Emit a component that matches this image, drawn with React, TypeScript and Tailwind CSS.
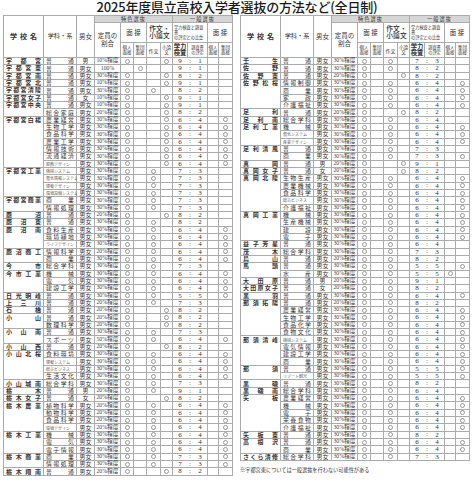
import React from 'react';

type School = { n: string; c: string[][] };

const s = (n: string, ...c: string[]): School => ({ n, c: c.map((x) => x.split('/')) });

const LEFT: School[] = [
  s('宇都宮', '普通/男/10%程度/1001/91/00'),
  s('宇都宮東', '普通/男女/100%/0100/91/00'),
  s('宇都宮南', '普通/男女/30%程度/1001/82/00'),
  s('宇都宮北', '普通/男女/10%程度/1001/91/00'),
  s('宇都宮清陵', '普通/男女/30%程度/1010/82/00'),
  s('宇都宮女子', '普通/女/10%程度/1001/91/00'),
  s('宇都宮中央', '普通/男女/10%程度/1001/91/00', '総合家庭/男女/20%程度/1001/82/00'),
  s(
    '宇都宮白楊',
    '農業経営/男女/30%程度/1001/64/01',
    '生物工学/男女/30%程度/1001/64/01',
    '食品科学/男女/30%程度/1001/64/01',
    '農業工学/男女/30%程度/1001/64/01',
    '情報技術/男女/30%程度/1001/64/01',
    '流通経済/男女/30%程度/1001/64/01',
    '服飾デザイン/男女/30%程度/1001/64/01'
  ),
  s(
    '宇都宮工業',
    '機械システム/男女/30%程度/1010/73/00',
    '電気情報システム/男女/30%程度/1010/73/00',
    '建築デザイン/男女/30%程度/1010/73/00',
    '環境設備システム/男女/30%程度/1010/73/00'
  ),
  s('宇都宮商業', '商業/男女/30%程度/1010/73/00', '情報処理/男女/30%程度/1010/73/00'),
  s('鹿沼', '普通/男女/20%程度/1001/82/00'),
  s('鹿沼東', '普通/男女/30%程度/1010/82/00'),
  s(
    '鹿沼南',
    '食料生産/男女/30%程度/1010/64/01',
    '環境緑地/男女/30%程度/1010/64/01',
    'ライフデザイン/男女/30%程度/1010/64/01'
  ),
  s('鹿沼商工', '情報科学/男女/20%程度/1010/64/01', '商業/男女/30%程度/1010/64/01'),
  s('今市', '総合学科/男女/30%程度/1010/73/00'),
  s(
    '今市工業',
    '機械/男女/30%程度/1010/64/01',
    '電気/男女/30%程度/1010/64/01',
    '建設工学/男女/30%程度/1010/64/01'
  ),
  s('日光明峰', '普通/男女/30%程度/1010/55/01'),
  s('上三川', '普通/男女/20%程度/1010/73/00'),
  s('石橋', '普通/男女/20%程度/1001/82/00'),
  s('小山', '普通/男女/20%程度/1001/82/00', '数理科学/男女/20%程度/1001/82/00'),
  s('小山南', '普通/男女/30%程度/1010/73/00', 'スポーツ/男女/50%程度/1010/64/01'),
  s('小山西', '普通/男女/20%程度/1001/82/00'),
  s(
    '小山北桜',
    '食料環境/男女/30%程度/1010/64/01',
    '建築システム/男女/30%程度/1010/64/01',
    '総合ビジネス/男女/30%程度/1010/64/01',
    '生活文化/男女/30%程度/1010/64/01'
  ),
  s('小山城南', '総合学科/男女/30%程度/1010/73/00'),
  s('栃木', '普通/男/20%程度/1010/91/00'),
  s('栃木女子', '普通/女/20%程度/1001/82/00'),
  s(
    '栃木農業',
    '植物科学/男女/20%程度/1010/64/01',
    '動物科学/男女/20%程度/1010/64/01',
    '食品科学/男女/20%程度/1010/64/01',
    '環境デザイン/男女/20%程度/1010/64/01'
  ),
  s(
    '栃木工業',
    '機械/男女/30%程度/1010/64/01',
    '電気/男女/30%程度/1010/64/01',
    '電子情報/男女/30%程度/1010/64/01'
  ),
  s('栃木商業', '商業/男女/30%程度/1010/73/01', '情報処理/男女/30%程度/1010/73/01'),
  s('栃木翔南', '普通/男女/20%程度/1001/82/00'),
];

const RIGHT: School[] = [
  s('壬生', '普通/男女/30%程度/1010/73/00'),
  s('佐野', '普通/男女/30%程度/1010/82/00'),
  s('佐野東', '普通/男女/20%程度/1001/82/00'),
  s(
    '佐野松桜',
    '情報制御/男女/30%程度/1010/64/01',
    '商業/男女/30%程度/1010/64/01',
    '家政/男女/30%程度/1010/64/01',
    '介護福祉/男女/30%程度/1010/64/01'
  ),
  s('足利', '普通/男女/20%程度/1001/82/00'),
  s('足利南', '総合学科/男女/30%程度/1010/64/00'),
  s(
    '足利工業',
    '機械/男女/30%程度/1010/64/01',
    '電気システム/男女/30%程度/1010/64/01',
    '産業デザイン/男女/30%程度/1010/64/01'
  ),
  s('足利清風', '普通/男女/30%程度/1010/73/00', '商業/男女/30%程度/1010/73/01'),
  s('真岡', '普通/男/20%程度/1001/91/00'),
  s('真岡女子', '普通/女/20%程度/1001/82/00'),
  s(
    '真岡北陵',
    '生物生産/男女/30%程度/1010/64/01',
    '農業機械/男女/30%程度/1010/64/01',
    '食品科学/男女/30%程度/1010/64/01',
    '総合ビジネス/男女/30%程度/1010/64/01',
    '介護福祉/男女/30%程度/1010/64/01'
  ),
  s(
    '真岡工業',
    '機械/男女/30%程度/1010/64/01',
    '生産機械/男女/30%程度/1010/64/01',
    '建設/男女/30%程度/1010/64/01',
    '電子/男女/30%程度/1010/64/01'
  ),
  s('益子芳星', '普通/男女/30%程度/1010/64/00'),
  s('茂木', '総合学科/男女/30%程度/1010/73/00'),
  s('烏山', '普通/男女/20%程度/1010/82/00'),
  s('馬頭', '普通/男女/30%程度/1010/55/01', '水産/男女/30%程度/1010/55/10'),
  s('大田原', '普通/男/20%程度/1010/91/00'),
  s('大田原女子', '普通/女/20%程度/1010/82/00'),
  s('黒羽', '普通/男女/30%程度/1010/64/01'),
  s(
    '那須拓陽',
    '普通/男女/20%程度/1010/82/00',
    '農業経営/男女/30%程度/1010/64/01',
    '生物工学/男女/30%程度/1010/64/01',
    '食品化学/男女/30%程度/1010/64/01',
    '食物文化/男女/30%程度/1010/64/01'
  ),
  s(
    '那須清峰',
    '機械システム/男女/30%程度/1010/64/01',
    '電気情報/男女/30%程度/1010/64/01',
    '建設工学/男女/30%程度/1010/64/01',
    '商業/男女/30%程度/1010/64/01'
  ),
  s('那須', '普通/男女/30%程度/1010/55/01', 'リゾート観光/男女/30%程度/1010/55/01'),
  s('黒磯', '普通/男女/30%程度/1010/82/00'),
  s('黒磯南', '総合学科/男女/30%程度/1010/64/00'),
  s(
    '矢板',
    '農業経営/男女/30%程度/1010/64/01',
    '機械/男女/30%程度/1010/64/01',
    '電子/男女/30%程度/1010/64/01',
    '栄養食物/男女/30%程度/1010/64/01',
    '介護福祉/男女/30%程度/1010/64/01'
  ),
  s('矢板東', '普通/男女/30%程度/1010/82/00'),
  s('高根沢', '普通/男女/30%程度/1010/64/01', '商業/男女/30%程度/1010/64/01'),
  s('さくら清修', '総合学科/男女/30%程度/1010/73/00'),
];

const SPAN: Record<number, string> = {
  1: 'row-span-1',
  2: 'row-span-2',
  3: 'row-span-3',
  4: 'row-span-4',
  5: 'row-span-5',
  6: 'row-span-6',
  7: 'row-span-7',
};

const C = 'bg-white flex items-center justify-center min-w-0 min-h-0';

function Dot() {
  return <span className="block w-[5px] h-[5px] rounded-full border border-[#999]" />;
}

function DotCell({ on }: { on: boolean }) {
  return <div className={C}>{on ? <Dot /> : null}</div>;
}

function Header() {
  const h = `${C} text-center text-[#333]`;
  return (
    <>
      <div className={`${h} row-span-3 text-[7px] leading-none font-semibold tracking-[3px] pl-[3px]`}>学校名</div>
      <div className={`${h} row-span-3 text-[6.2px] leading-none`}>学科・系</div>
      <div className={`${h} row-span-3 text-[6.5px] leading-none`}>男女</div>
      <div className={`${C} col-span-5 !bg-[#d6d6d6] text-[5.2px] leading-none tracking-[1px]`}>特色選抜</div>
      <div className={`${C} col-span-4 !bg-[#d6d6d6] text-[5.2px] leading-none tracking-[1px]`}>一般選抜</div>

      <div className={`${h} row-span-2 text-[6.5px] leading-[7.5px]`}>
        定員の
        <br />
        割合
      </div>
      <div className={`${h} col-span-2 text-[6.5px] leading-none tracking-[1.5px] pl-[1.5px]`}>面接</div>
      <div className={`${h} col-span-2 text-[6.8px] leading-[7.5px] font-medium`}>
        作文・
        <br />
        小論文
      </div>
      <div className={`${h} col-span-2 text-[4.2px] leading-[5px] !justify-start pl-[1px] text-left`}>
        学力検査と調査書
        <br />
        の評定との比重
      </div>
      <div className={`${h} col-span-2 text-[6.5px] leading-none tracking-[1.5px] pl-[1.5px]`}>面接</div>

      <div className={`${h} text-[4.5px] leading-[5px]`}>
        個人
        <br />
        面接
      </div>
      <div className={`${h} text-[4.5px] leading-[5px]`}>
        集団
        <br />
        面接
      </div>
      <div className={`${h} text-[5px] leading-[5px]`}>作文</div>
      <div className={`${h} text-[4.5px] leading-[5px]`}>
        小論
        <br />文
      </div>
      <div className={`${h} text-[6.3px] leading-[6.5px] font-semibold`}>
        学力
        <br />
        検査
      </div>
      <div className={`${h} text-[4.2px] leading-[5px]`}>
        調査書
        <br />
        の評定
      </div>
      <div className={`${h} text-[4.5px] leading-[5px]`}>
        個人
        <br />
        面接
      </div>
      <div className={`${h} text-[4.5px] leading-[5px]`}>
        集団
        <br />
        面接
      </div>
    </>
  );
}

function Rows({ school }: { school: School }) {
  return (
    <>
      {school.c.map((c, i) => {
        const [course, sex, pct, f, r, g] = c;
        const long = course.length >= 6;
        return (
          <React.Fragment key={i}>
            {i === 0 ? (
              <div className={`bg-white ${SPAN[school.c.length]} px-[2px] min-w-0 min-h-0`}>
                <div className="h-[6.33px] flex items-center">
                  <div className="w-full whitespace-nowrap text-[6px] leading-none font-bold text-justify [text-align-last:justify] text-[#333]">
                    {school.n}
                  </div>
                </div>
              </div>
            ) : null}
            <div className="bg-white px-[2px] flex items-center min-w-0 min-h-0">
              {long ? (
                <div className="text-[4px] leading-none whitespace-nowrap text-[#666]">{course}</div>
              ) : (
                <div className="w-full whitespace-nowrap text-[5.9px] leading-none text-justify [text-align-last:justify]">
                  {course}
                </div>
              )}
            </div>
            <div className={`${C} text-[5.9px] leading-none whitespace-nowrap`}>{sex}</div>
            <div
              className={`${C} text-[5.8px] leading-none whitespace-nowrap font-['Liberation_Serif','Noto_Sans_CJK_JP',serif] text-[#444]`}
            >
              {pct}
            </div>
            <DotCell on={f[0] === '1'} />
            <DotCell on={f[1] === '1'} />
            <DotCell on={f[2] === '1'} />
            <DotCell on={f[3] === '1'} />
            <div className="bg-white col-span-2 min-h-0 grid grid-cols-[14px_6px_14px] items-center text-center text-[7px] leading-none font-['Liberation_Serif',serif] text-[#333]">
              <span>{r[0]}</span>
              <span className="text-[5.5px]">:</span>
              <span>{r[1]}</span>
            </div>
            <DotCell on={g[0] === '1'} />
            <DotCell on={g[1] === '1'} />
          </React.Fragment>
        );
      })}
    </>
  );
}

function Table({ data }: { data: School[] }) {
  return (
    <div className="grid grid-cols-[39px_32px_17px_25px_12px_12px_13px_11px_14px_19px_10px_13px] grid-rows-[5.5px_19.5px_14px] auto-rows-[6.33px] gap-px bg-[#ababab] border border-[#ababab] w-[230px] font-['Noto_Sans_CJK_JP',sans-serif] text-[#333]">
      <Header />
      {data.map((sc) => (
        <Rows key={sc.n} school={sc} />
      ))}
    </div>
  );
}

export default function App() {
  return (
    <div className="w-[474px] h-[481px] bg-white overflow-hidden font-['Noto_Sans_CJK_JP',sans-serif]">
      <div className="h-[15px] text-center text-[13px] leading-[14px] font-medium text-[#1a1a1a] tracking-[-0.2px]">
        2025年度県立高校入学者選抜の方法など(全日制)
      </div>
      <div className="flex items-start gap-[7px] pl-[3px]">
        <Table data={LEFT} />
        <div className="flex flex-col">
          <Table data={RIGHT} />
          <p className="mt-[6px] text-[5.2px] leading-[6px] text-[#333]">
            ※宇都宮東については一般選抜を行わない可能性がある
          </p>
        </div>
      </div>
    </div>
  );
}
